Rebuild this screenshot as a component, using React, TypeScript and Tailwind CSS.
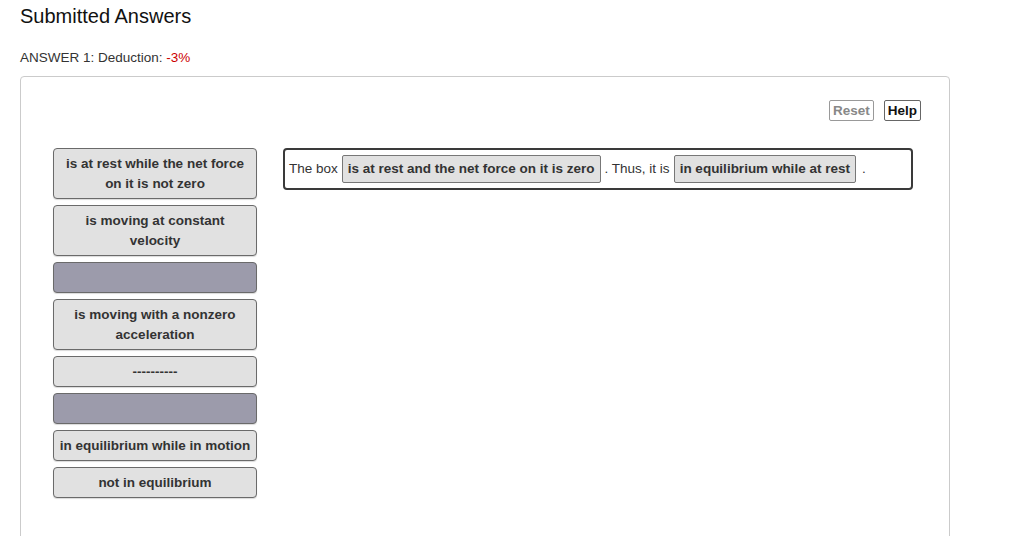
import React from "react";

const Tile = ({ children, gray }: { children?: React.ReactNode; gray?: boolean }) => (
  <div
    className={`w-[204px] min-h-[31px] rounded-[4px] border border-[#6a6a6a] px-[2px] py-[4.5px] text-center text-[13.5px] font-bold leading-[20px] text-[#333] shadow-[0_1px_1px_rgba(0,0,0,0.15)] ${
      gray ? "bg-[#9c9bab]" : "bg-[#e1e1e1]"
    }`}
  >
    {children}
  </div>
);

const Drop = ({ children }: { children: React.ReactNode }) => (
  <span className="inline-block h-[28px] rounded-[2px] border border-[#777] bg-[#e1e1e1] px-[5px] text-[13.5px] font-bold leading-[26px] text-[#333]">
    {children}
  </span>
);

export default function App() {
  return (
    <div className="min-h-[536px] w-[1024px] overflow-hidden bg-white font-['Liberation_Sans',Arial,sans-serif] text-[#222]">
      <div className="px-[20px]">
        <h1 className="pt-[4px] text-[20px] leading-[24px] text-[#111]">Submitted Answers</h1>
        <div className="mt-[22px] text-[13.5px] leading-[16px] text-[#333]">
          ANSWER 1: Deduction: <span className="text-[#c00]">-3%</span>
        </div>
        <div className="mt-[10px] h-[480px] w-[930px] rounded-[4px] border border-[#cbcbcb] pr-[28px]">
          <div className="flex justify-end gap-[10px] pt-[23px]">
            <button className="h-[21px] rounded-[2px] border border-[#999] bg-white px-[3px] text-[13.5px] font-bold leading-[19px] text-[#888]">
              Reset
            </button>
            <button className="h-[21px] rounded-[2px] border border-[#666] bg-white px-[3px] text-[13.5px] font-bold leading-[19px] text-[#111]">
              Help
            </button>
          </div>
          <div className="mt-[27px] flex items-start gap-[26px] pl-[32px]">
            <div className="flex flex-col gap-[6px]">
              <Tile>
                is at rest while the net force
                <br />
                on it is not zero
              </Tile>
              <Tile>
                is moving at constant
                <br />
                velocity
              </Tile>
              <Tile gray />
              <Tile>
                is moving with a nonzero
                <br />
                acceleration
              </Tile>
              <Tile>----------</Tile>
              <Tile gray />
              <Tile>in equilibrium while in motion</Tile>
              <Tile>not in equilibrium</Tile>
            </div>
            <div className="flex h-[42px] w-[630px] items-center gap-[4px] rounded-[4px] border-2 border-[#3a3a3a] px-[4px] text-[13.5px] text-[#333]">
              <span>The box</span>
              <Drop>is at rest and the net force on it is zero</Drop>
              <span>. Thus, it is</span>
              <Drop>in equilibrium while at rest</Drop>
              <span className="ml-[2px]">.</span>
            </div>
          </div>
        </div>
      </div>
    </div>
  );
}
